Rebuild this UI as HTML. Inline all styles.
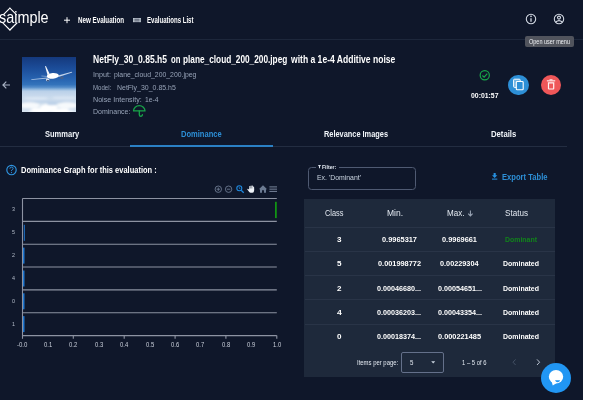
<!DOCTYPE html>
<html lang="en">
<head>
<meta charset="utf-8">
<title>Saimple - Dominance</title>
<style>
html,body{margin:0;padding:0;background:#ffffff;}
body{width:600px;height:400px;overflow:hidden;position:relative;font-family:"Liberation Sans",sans-serif;}
#app{position:absolute;left:0;top:0;width:583px;height:400px;background:#0f172a;overflow:hidden;}
.t{position:absolute;white-space:nowrap;line-height:12px;transform-origin:0 50%;font-family:"Liberation Sans",sans-serif;}
.a{position:absolute;}
svg{position:absolute;left:0;top:0;overflow:visible;}
</style>
</head>
<body>
<div id="app">
<!-- header divider -->
<div class="a" style="left:0;top:39px;width:583px;height:1px;background:#1d273b"></div>

<!-- tabs underline -->
<div class="a" style="left:0;top:145.5px;width:567px;height:1px;background:#232d41"></div>
<div class="a" style="left:130px;top:144.5px;width:142.7px;height:2px;background:#2b80c4"></div>

<!-- thumbnail -->
<div class="a" style="left:22px;top:57.4px;width:54px;height:54.4px;overflow:hidden;background:linear-gradient(180deg,#15397d 0%,#1b4c98 20%,#2763b0 40%,#3373bb 50%,#558dca 55%,#8cb4dc 58.5%,#b9d0e9 62%,#c3d6eb 67%,#cddded 76%,#dae5f1 100%)">
  <svg width="54" height="55" viewBox="0 0 54 55">
    <defs><filter id="bl" x="-20%" y="-20%" width="140%" height="140%"><feGaussianBlur stdDeviation="1.1"/></filter>
    <filter id="bs" x="-20%" y="-20%" width="140%" height="140%"><feGaussianBlur stdDeviation="0.35"/></filter></defs>
    <!-- clouds -->
    <g filter="url(#bl)">
            <ellipse cx="14" cy="41.5" rx="12" ry="1.6" fill="#dbe7f4"/>
      <ellipse cx="42" cy="41" rx="12" ry="1.6" fill="#d9e5f3"/>
      <ellipse cx="27" cy="44.5" rx="30" ry="1.6" fill="#c3d5ea"/>
      <ellipse cx="8" cy="48.5" rx="10" ry="3.2" fill="#f6f9fc"/>
      <ellipse cx="27" cy="50" rx="9" ry="3" fill="#ffffff"/>
      <ellipse cx="45" cy="48.5" rx="10" ry="3.2" fill="#f6f9fc"/>
      <ellipse cx="18" cy="53.5" rx="12" ry="2.6" fill="#ffffff"/>
      <ellipse cx="40" cy="54" rx="12" ry="2.6" fill="#ffffff"/>
      <ellipse cx="30" cy="47" rx="5" ry="1.2" fill="#b9cfe8"/>
      <ellipse cx="6" cy="52.6" rx="4" ry="1" fill="#c9daed"/>
      <ellipse cx="50" cy="52.4" rx="4" ry="1" fill="#c9daed"/>
    </g>
    <!-- plane -->
    <g filter="url(#bs)">
      <path d="M9.3 22.3 L25.5 20.4 L25.8 21.6 L9.4 22.9 Z" fill="#a9c2e2"/>
      <path d="M36 18.4 L49.9 14.8 L50.2 15.5 L36.6 20 Z" fill="#c2d3ea"/>
      <path d="M19.4 18.8 L25.6 18.9 L25.6 19.6 L19.4 19.3 Z" fill="#b6cae6"/>
      <path d="M23 9.1 L24 9.2 L27.6 16.8 L25.6 18.2 Z" fill="#f4f7fb"/>
      <ellipse cx="30.8" cy="18.9" rx="6" ry="2.9" fill="#ffffff" transform="rotate(-5 30.8 18.9)"/>
      <ellipse cx="25.7" cy="22.9" rx="1.7" ry="1.4" fill="#e8eef7"/>
      <ellipse cx="25.9" cy="23.6" rx="1.2" ry="0.9" fill="#3f557f"/>
      <ellipse cx="39.9" cy="20.7" rx="1.6" ry="1.3" fill="#4a6089"/>
    </g>
  </svg>
</div>

<!-- table -->
<div class="a" style="left:304.2px;top:199.2px;width:250.8px;height:177.7px;background:#1e293b"></div>
<div class="a" style="left:304.5px;top:226.6px;width:250px;height:1px;background:#293447"></div>
<div class="a" style="left:304.5px;top:250.9px;width:250px;height:1px;background:#293447"></div>
<div class="a" style="left:304.5px;top:275.1px;width:250px;height:1px;background:#293447"></div>
<div class="a" style="left:304.5px;top:299.4px;width:250px;height:1px;background:#293447"></div>
<div class="a" style="left:304.5px;top:323.6px;width:250px;height:1px;background:#293447"></div>

<!-- filter outlined input -->
<div class="a" style="left:308.1px;top:166.8px;width:107.9px;height:22.8px;border:1px solid #4f5a72;border-radius:3.5px;box-sizing:border-box"></div>
<div class="a" style="left:315.5px;top:164px;width:23px;height:5px;background:#0f172a"></div>

<!-- page size select -->
<div class="a" style="left:401.2px;top:352.2px;width:42.8px;height:20.6px;border:1px solid #64708a;border-radius:2px;box-sizing:border-box"></div>

<!-- tooltip -->
<div class="a" style="left:525px;top:36.3px;width:49px;height:10.9px;border-radius:2px;background:#51545d"></div>

<!-- action buttons -->
<div class="a" style="left:508.3px;top:74.6px;width:20.5px;height:20.5px;border-radius:50%;background:#2d8fd6"></div>
<div class="a" style="left:540.8px;top:74.6px;width:20.5px;height:20.5px;border-radius:50%;background:#ef5759"></div>

<!-- chat bubble -->
<div class="a" style="left:540.8px;top:362.6px;width:30.2px;height:30.2px;border-radius:50%;background:#2196f3"></div>

<svg width="583" height="400" viewBox="0 0 583 400">
  <!-- logo diamond -->
  <g stroke="#ffffff" stroke-width="1.1" fill="none" stroke-linecap="round">
    <path d="M9.9 8.1 L3.7 14.3"/>
    <path d="M9.9 8.1 L16.4 14.6"/>
    <path d="M2.8 22.9 L9.9 30"/>
    <path d="M16.9 23 L9.9 30"/>
  </g>
  <!-- plus -->
  <path d="M64 20.2 H70 M67 17.2 V23.2" stroke="#ffffff" stroke-width="1"/>
  <!-- list icon -->
  <g>
    <rect x="133" y="18" width="7.8" height="4.1" fill="#4a5264"/>
    <rect x="133" y="18" width="7.8" height="0.8" fill="#b5bcc8"/>
    <rect x="133" y="19.65" width="7.8" height="0.8" fill="#b5bcc8"/>
    <rect x="133" y="21.3" width="7.8" height="0.8" fill="#b5bcc8"/>
    <rect x="133.3" y="18" width="1" height="4.1" fill="#c6d2d8"/>
    <rect x="139.6" y="18" width="1" height="4.1" fill="#c6d2d8"/>
  </g>
  <!-- info icon -->
  <g stroke="#d5dbe5" fill="none" stroke-width="1.05">
    <circle cx="531" cy="19" r="4.7"/>
    <path d="M531 18.2 V21.7" stroke-width="1.3"/>
  </g>
  <circle cx="531" cy="16.4" r="0.8" fill="#d5dbe5"/>
  <!-- user icon -->
  <g stroke="#d5dbe5" fill="none" stroke-width="1.05">
    <circle cx="559" cy="19" r="4.7"/>
    <circle cx="559" cy="17.6" r="1.5"/>
    <path d="M555.8 22 Q559 19.2 562.2 22"/>
  </g>
  <!-- back arrow -->
  <path d="M10 85 H3 M6.3 81.6 L2.9 85 L6.3 88.4" stroke="#a8b2c3" stroke-width="1.15" fill="none"/>
  <!-- umbrella -->
  <g stroke="#18a549" fill="none" stroke-width="1.3" stroke-linecap="round" stroke-linejoin="round">
    <path d="M133.5 110.9 A5.75 5.2 0 0 1 145 110.9 Z"/>
    <path d="M139.3 110.9 V114.7 A1.55 1.55 0 0 0 142.4 114.7"/>
  </g>
  <!-- check circle -->
  <g stroke="#17a84a" fill="none" stroke-width="1.2">
    <circle cx="484.75" cy="75.3" r="4.6"/>
    <path d="M482.4 75.5 L484.1 77.2 L487.3 73.7"/>
  </g>
  <!-- copy icon -->
  <g stroke="#ffffff" stroke-width="1">
    <rect x="513.6" y="79.2" width="6.6" height="8.2" rx="0.9" fill="rgba(255,255,255,0.32)"/>
    <rect x="516.3" y="81.5" width="6.9" height="8.3" rx="0.9" fill="#2d8fd6" stroke-width="1.1"/>
  </g>
  <!-- trash icon -->
  <g fill="#fff3f3">
    <rect x="546.9" y="80.3" width="8.3" height="1.1"/>
    <rect x="549.5" y="79.3" width="3" height="1.1"/>
    <path d="M547.9 82.2 H554.3 V88.5 Q554.3 89.6 553.2 89.6 H549 Q547.9 89.6 547.9 88.5 Z M549.1 83.4 V88.4 H553.1 V83.4 Z" fill-rule="evenodd"/>
  </g>
  <!-- help icon -->
  <circle cx="11.5" cy="170" r="4.7" stroke="#2f94e0" stroke-width="1.15" fill="none"/>
  <path d="M9.9 168.7 Q10 167.1 11.5 167.1 Q13.1 167.1 13.1 168.5 Q13.1 169.5 11.5 170.3 V171.1" stroke="#2f94e0" stroke-width="1" fill="none"/>
  <circle cx="11.5" cy="172.6" r="0.6" fill="#2f94e0"/>

  <!-- chart toolbar -->
  <g stroke="#6d7a92" fill="none" stroke-width="0.9">
    <circle cx="218.3" cy="189.2" r="3.2"/>
    <path d="M216.6 189.2 H220 M218.3 187.5 V190.9"/>
    <circle cx="228.6" cy="189.2" r="3.2"/>
    <path d="M226.9 189.2 H230.3"/>
  </g>
  <g stroke="#1f8ae0" fill="none">
    <circle cx="239.3" cy="188.3" r="2.5" stroke-width="1.1"/>
    <path d="M241.2 190.3 L243.7 192.8" stroke-width="1.3"/>
    <path d="M239.3 186.9 V188.5 H240.3" stroke-width="0.7"/>
  </g>
  <!-- hand -->
  <g fill="#eef2f7">
    <rect x="249.3" y="186.1" width="1.05" height="4" rx="0.5"/>
    <rect x="250.55" y="185.4" width="1.05" height="4.5" rx="0.5"/>
    <rect x="251.8" y="185.6" width="1.05" height="4.5" rx="0.5"/>
    <rect x="253.05" y="186.4" width="1.05" height="4" rx="0.5"/>
    <path d="M249.3 188.6 H254.1 V190.6 Q254.1 192.8 252.4 192.8 H250.6 Q249.8 192.8 249.2 192 L247.2 189.3 Q247.4 188.5 248.4 188.9 L249.3 189.9 Z"/>
  </g>
  <!-- home -->
  <path d="M258.9 189.2 L263 185.3 L267.1 189.2 L266 189.2 L266 192.8 L264 192.8 L264 190.3 L262 190.3 L262 192.8 L260 192.8 L260 189.2 Z" fill="#6c7b92"/>
  <!-- menu -->
  <path d="M269.4 186.9 H277 M269.4 189.15 H277 M269.4 191.4 H277" stroke="#78859b" stroke-width="1"/>

  <!-- chart grid -->
  <g stroke="#8d93a2" stroke-width="1.1" fill="none">
    <path d="M22.4 198.5 H276.8"/>
    <path d="M22.4 221.35 H276.8"/>
    <path d="M22.4 244.2 H276.8"/>
    <path d="M22.4 267.05 H276.8"/>
    <path d="M22.4 289.9 H276.8"/>
    <path d="M22.4 312.75 H276.8"/>
    <path d="M22.4 335.6 H276.8"/>
    <path d="M22.5 198.5 V338.8"/>
    <path d="M73.3 335.6 V338.8 M124.2 335.6 V338.8 M175.1 335.6 V338.8 M225.9 335.6 V338.8 M276.8 335.6 V338.8"/>
  </g>
  <!-- bars -->
  <rect x="275.1" y="201.8" width="1.6" height="16.3" fill="#12a212"/>
  <rect x="23.8" y="224.8" width="1" height="16" fill="#1f77d0"/>
  <rect x="23" y="247.6" width="1.5" height="16" fill="#1f77d0"/>
  <rect x="23" y="270.5" width="1.5" height="16" fill="#1f77d0"/>
  <rect x="23" y="293.3" width="1.5" height="16" fill="#1f77d0"/>
  <rect x="23" y="316.1" width="1.5" height="16" fill="#1f77d0"/>

  <!-- filter funnel -->
  <path d="M317.9 165 H321.1 L320 166.5 V168.4 L319 167.9 V166.5 Z" fill="#dde3ec"/>
  <!-- export icon -->
  <g fill="#2690e0">
    <path d="M493.6 173 H495.7 V175.3 H497.3 L494.65 177.9 L492 175.3 H493.6 Z"/>
    <rect x="492" y="178.6" width="5.3" height="1"/>
  </g>
  <!-- sort arrow -->
  <path d="M470.4 210.4 V215.9 M468.2 213.7 L470.4 215.9 L472.6 213.7" stroke="#9aa5b5" stroke-width="1.05" fill="none"/>
  <!-- select caret -->
  <path d="M431.2 361.2 H435.2 L433.2 363.4 Z" fill="#cbd5e1"/>
  <!-- pagination chevrons -->
  <path d="M515.6 359.4 L513 362.2 L515.6 365" stroke="#475569" stroke-width="0.9" fill="none"/>
  <path d="M537 359.4 L539.6 362.2 L537 365" stroke="#cbd5e1" stroke-width="0.9" fill="none"/>
  <!-- chat glyph -->
  <ellipse cx="556" cy="376.7" rx="7.2" ry="6.8" fill="#ffffff"/>
  <path d="M551.6 381.4 L552.8 385.6 L556.4 383.2 Z" fill="#ffffff"/>
  <path d="M555 380.2 H560.2 Q559.4 382.2 557.6 382.2 Q555.8 382.2 555 380.2 Z" fill="#2196f3"/>
</svg>


<!-- text -->
<span class="t" style="left:-1.00px;top:11px;font-size:16.4px;font-weight:400;color:#ffffff;transform:scaleX(0.8781)">saimple</span>
<span class="t" style="left:77.50px;top:14px;font-size:8.6px;font-weight:700;color:#ffffff;transform:scaleX(0.7242)">New Evaluation</span>
<span class="t" style="left:147.00px;top:14px;font-size:8.6px;font-weight:700;color:#ffffff;transform:scaleX(0.7055)">Evaluations List</span>
<span class="t" style="left:529.00px;top:36px;font-size:6.8px;font-weight:400;color:#eceef2;transform:scaleX(0.8096)">Open user menu</span>
<span class="t" style="left:93.00px;top:54px;font-size:10.0px;font-weight:700;color:#ffffff;transform:scaleX(0.8533)">NetFly_30_0.85.h5</span>
<span class="t" style="left:170.60px;top:54px;font-size:10.0px;font-weight:700;color:#ffffff;transform:scaleX(0.7693)">on</span>
<span class="t" style="left:183.00px;top:54px;font-size:10.0px;font-weight:700;color:#ffffff;transform:scaleX(0.8267)">plane_cloud_200_200.jpeg</span>
<span class="t" style="left:290.70px;top:54px;font-size:10.0px;font-weight:700;color:#ffffff;transform:scaleX(0.8557)">with a 1e-4 Additive noise</span>
<span class="t" style="left:93.00px;top:69px;font-size:7.6px;font-weight:400;color:#98a4b8;transform:scaleX(0.9474)">Input:</span>
<span class="t" style="left:114.00px;top:69px;font-size:7.6px;font-weight:400;color:#98a4b8;transform:scaleX(0.9033)">plane_cloud_200_200.jpeg</span>
<span class="t" style="left:93.00px;top:82px;font-size:7.6px;font-weight:400;color:#98a4b8;transform:scaleX(0.7984)">Model:</span>
<span class="t" style="left:117.40px;top:82px;font-size:7.6px;font-weight:400;color:#98a4b8;transform:scaleX(0.9163)">NetFly_30_0.85.h5</span>
<span class="t" style="left:93.00px;top:94px;font-size:7.6px;font-weight:400;color:#98a4b8;transform:scaleX(0.9399)">Noise Intensity:</span>
<span class="t" style="left:145.20px;top:94px;font-size:7.6px;font-weight:400;color:#98a4b8;transform:scaleX(0.8946)">1e-4</span>
<span class="t" style="left:93.00px;top:106px;font-size:7.6px;font-weight:400;color:#98a4b8;transform:scaleX(0.9227)">Dominance:</span>
<span class="t" style="left:471.00px;top:90px;font-size:7.8px;font-weight:700;color:#ffffff;transform:scaleX(0.8809)">00:01:57</span>
<span class="t" style="left:44.70px;top:128px;font-size:8.4px;font-weight:700;color:#f1f5f9;transform:scaleX(0.8986)">Summary</span>
<span class="t" style="left:181.00px;top:128px;font-size:8.4px;font-weight:700;color:#2d8fd6;transform:scaleX(0.9013)">Dominance</span>
<span class="t" style="left:324.30px;top:128px;font-size:8.4px;font-weight:700;color:#f1f5f9;transform:scaleX(0.8810)">Relevance Images</span>
<span class="t" style="left:490.70px;top:128px;font-size:8.4px;font-weight:700;color:#f1f5f9;transform:scaleX(0.9210)">Details</span>
<span class="t" style="left:20.50px;top:164px;font-size:8.6px;font-weight:700;color:#ffffff;transform:scaleX(0.8717)">Dominance Graph for this evaluation :</span>
<span class="t" style="left:321.80px;top:161px;font-size:6.0px;font-weight:700;color:#e2e8f0;transform:scaleX(0.8517)">Filter:</span>
<span class="t" style="left:316.60px;top:172px;font-size:7.4px;font-weight:400;color:#cbd5e1;transform:scaleX(0.9325)">Ex. 'Dominant'</span>
<span class="t" style="left:501.50px;top:171px;font-size:8.8px;font-weight:700;color:#2d8fd6;transform:scaleX(0.8644)">Export Table</span>
<span class="t" style="left:325.00px;top:207px;font-size:9.0px;font-weight:400;color:#e2e8f0;transform:scaleX(0.8217)">Class</span>
<span class="t" style="left:387.00px;top:207px;font-size:9.0px;font-weight:400;color:#e2e8f0;transform:scaleX(0.9403)">Min.</span>
<span class="t" style="left:446.50px;top:207px;font-size:9.0px;font-weight:400;color:#e2e8f0;transform:scaleX(0.8967)">Max.</span>
<span class="t" style="left:504.50px;top:207px;font-size:9.0px;font-weight:400;color:#e2e8f0;transform:scaleX(0.9014)">Status</span>
<span class="t" style="left:336.75px;top:234px;font-size:7.6px;font-weight:700;color:#ffffff;transform:scaleX(1.0627)">3</span>
<span class="t" style="left:381.50px;top:234px;font-size:7.6px;font-weight:700;color:#ffffff;transform:scaleX(0.9748)">0.9965317</span>
<span class="t" style="left:442.00px;top:234px;font-size:7.6px;font-weight:700;color:#ffffff;transform:scaleX(0.9748)">0.9969661</span>
<span class="t" style="left:505.00px;top:234px;font-size:7.6px;font-weight:700;color:#11831b;transform:scaleX(0.9139)">Dominant</span>
<span class="t" style="left:336.75px;top:258px;font-size:7.6px;font-weight:700;color:#ffffff;transform:scaleX(1.0627)">5</span>
<span class="t" style="left:377.50px;top:258px;font-size:7.6px;font-weight:700;color:#ffffff;transform:scaleX(0.9697)">0.001998772</span>
<span class="t" style="left:440.25px;top:258px;font-size:7.6px;font-weight:700;color:#ffffff;transform:scaleX(0.9595)">0.00229304</span>
<span class="t" style="left:503.00px;top:258px;font-size:7.6px;font-weight:700;color:#ffffff;transform:scaleX(0.9172)">Dominated</span>
<span class="t" style="left:336.75px;top:283px;font-size:7.6px;font-weight:700;color:#ffffff;transform:scaleX(1.0627)">2</span>
<span class="t" style="left:377.00px;top:283px;font-size:7.6px;font-weight:700;color:#ffffff;transform:scaleX(0.9472)">0.00046680...</span>
<span class="t" style="left:437.50px;top:283px;font-size:7.6px;font-weight:700;color:#ffffff;transform:scaleX(0.9472)">0.00054651...</span>
<span class="t" style="left:503.00px;top:283px;font-size:7.6px;font-weight:700;color:#ffffff;transform:scaleX(0.9172)">Dominated</span>
<span class="t" style="left:336.60px;top:307px;font-size:7.6px;font-weight:700;color:#ffffff;transform:scaleX(1.1336)">4</span>
<span class="t" style="left:377.00px;top:307px;font-size:7.6px;font-weight:700;color:#ffffff;transform:scaleX(0.9472)">0.00036203...</span>
<span class="t" style="left:437.50px;top:307px;font-size:7.6px;font-weight:700;color:#ffffff;transform:scaleX(0.9472)">0.00043354...</span>
<span class="t" style="left:503.00px;top:307px;font-size:7.6px;font-weight:700;color:#ffffff;transform:scaleX(0.9172)">Dominated</span>
<span class="t" style="left:336.75px;top:331px;font-size:7.6px;font-weight:700;color:#ffffff;transform:scaleX(1.0627)">0</span>
<span class="t" style="left:377.00px;top:331px;font-size:7.6px;font-weight:700;color:#ffffff;transform:scaleX(0.9472)">0.00018374...</span>
<span class="t" style="left:438.00px;top:331px;font-size:7.6px;font-weight:700;color:#ffffff;transform:scaleX(0.9697)">0.000221485</span>
<span class="t" style="left:503.00px;top:331px;font-size:7.6px;font-weight:700;color:#ffffff;transform:scaleX(0.9172)">Dominated</span>
<span class="t" style="left:357.00px;top:357px;font-size:6.4px;font-weight:400;color:#e2e8f0;transform:scaleX(0.9278)">Items per page:</span>
<span class="t" style="left:410.20px;top:357px;font-size:6.8px;font-weight:400;color:#e2e8f0;transform:scaleX(0.8992)">5</span>
<span class="t" style="left:462.40px;top:357px;font-size:6.4px;font-weight:400;color:#e2e8f0;transform:scaleX(0.9154)">1 – 5 of 6</span>
<span class="t" style="left:12.00px;top:203px;font-size:6.0px;font-weight:400;color:#b4bcc9;transform:scaleX(0.8972)">3</span>
<span class="t" style="left:12.00px;top:226px;font-size:6.0px;font-weight:400;color:#b4bcc9;transform:scaleX(0.8972)">5</span>
<span class="t" style="left:12.00px;top:249px;font-size:6.0px;font-weight:400;color:#b4bcc9;transform:scaleX(0.8972)">2</span>
<span class="t" style="left:12.00px;top:272px;font-size:6.0px;font-weight:400;color:#b4bcc9;transform:scaleX(0.8972)">4</span>
<span class="t" style="left:12.00px;top:295px;font-size:6.0px;font-weight:400;color:#b4bcc9;transform:scaleX(0.8972)">0</span>
<span class="t" style="left:12.00px;top:318px;font-size:6.0px;font-weight:400;color:#b4bcc9;transform:scaleX(0.8972)">1</span>
<span class="t" style="left:17.20px;top:339px;font-size:6.8px;font-weight:400;color:#c8ced9;transform:scaleX(0.8875)">-0.0</span>
<span class="t" style="left:43.74px;top:339px;font-size:6.8px;font-weight:400;color:#c8ced9;transform:scaleX(0.8674)">0.1</span>
<span class="t" style="left:69.18px;top:339px;font-size:6.8px;font-weight:400;color:#c8ced9;transform:scaleX(0.8674)">0.2</span>
<span class="t" style="left:94.62px;top:339px;font-size:6.8px;font-weight:400;color:#c8ced9;transform:scaleX(0.8674)">0.3</span>
<span class="t" style="left:120.06px;top:339px;font-size:6.8px;font-weight:400;color:#c8ced9;transform:scaleX(0.8674)">0.4</span>
<span class="t" style="left:145.50px;top:339px;font-size:6.8px;font-weight:400;color:#c8ced9;transform:scaleX(0.8674)">0.5</span>
<span class="t" style="left:170.94px;top:339px;font-size:6.8px;font-weight:400;color:#c8ced9;transform:scaleX(0.8674)">0.6</span>
<span class="t" style="left:196.38px;top:339px;font-size:6.8px;font-weight:400;color:#c8ced9;transform:scaleX(0.8674)">0.7</span>
<span class="t" style="left:221.82px;top:339px;font-size:6.8px;font-weight:400;color:#c8ced9;transform:scaleX(0.8674)">0.8</span>
<span class="t" style="left:247.26px;top:339px;font-size:6.8px;font-weight:400;color:#c8ced9;transform:scaleX(0.8674)">0.9</span>
<span class="t" style="left:272.70px;top:339px;font-size:6.8px;font-weight:400;color:#c8ced9;transform:scaleX(0.8674)">1.0</span>
</div>
</body>
</html>
